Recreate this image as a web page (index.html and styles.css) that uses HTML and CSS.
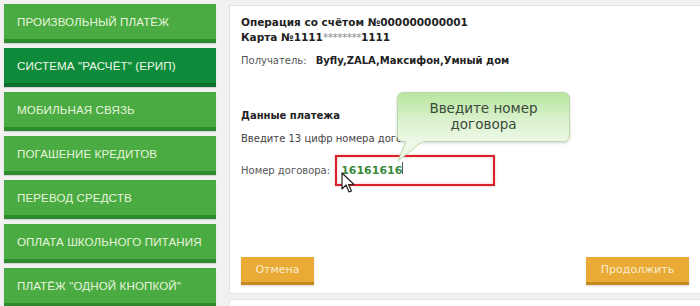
FILE: index.html
```html
<!DOCTYPE html>
<html lang="ru">
<head>
<meta charset="utf-8">
<title>ЕРИП</title>
<link rel="stylesheet" href="styles.css">
</head>
<body>
<div class="page">
  <nav class="menu">
    <div class="item">ПРОИЗВОЛЬНЫЙ ПЛАТЁЖ</div>
    <div class="item active">СИСТЕМА "РАСЧЁТ" (ЕРИП)</div>
    <div class="item">МОБИЛЬНАЯ СВЯЗЬ</div>
    <div class="item">ПОГАШЕНИЕ КРЕДИТОВ</div>
    <div class="item">ПЕРЕВОД СРЕДСТВ</div>
    <div class="item">ОПЛАТА ШКОЛЬНОГО ПИТАНИЯ</div>
    <div class="item">ПЛАТЁЖ "ОДНОЙ КНОПКОЙ"</div>
  </nav>
  <main class="main">
    <section class="card">
      <div class="head">
        <div>Операция со счётом №000000000001</div>
        <div>Карта №1111<span class="stars">********</span>1111</div>
      </div>
      <div class="recipient"><span class="label">Получатель:</span><b>Byfly,ZALA,Максифон,Умный дом</b></div>
      <div class="section-title">Данные платежа</div>
      <div class="hint">Введите 13 цифр номера договора</div>
      <div class="field">
        <span class="label">Номер договора:</span>
        <div class="input">16161616<span class="caret"></span></div>
      </div>
      <div class="actions">
        <button class="btn">Отмена</button>
        <button class="btn">Продолжить</button>
      </div>
      <div class="tooltip">Введите номер<br>договора</div>
      <svg class="tail" width="34" height="22" viewBox="0 0 34 22">
        <path d="M9 0 L1 20 L26 0 Z" fill="#eef8e6" stroke="#b9d8ab" stroke-width="1"/>
        <path d="M8 -1 L27 -1 L26 1 L9 1 Z" fill="#eef8e6"/>
      </svg>
      <svg class="pointer" width="14" height="22" viewBox="0 0 14 22">
        <path d="M1 1 L1 17 L5 13 L8 20 L10.5 19 L7.5 12.5 L13 12.5 Z" fill="#fff" stroke="#222" stroke-width="1.2" stroke-linejoin="round"/>
      </svg>
    </section>
    <section class="card2"></section>
  </main>
</div>
</body>
</html>
```

FILE: styles.css
```css
* { box-sizing: border-box; }
html, body { margin: 0; padding: 0; }
body {
  width: 700px;
  height: 306px;
  overflow: hidden;
  background: #f1f1f1;
  font-family: "DejaVu Sans", Verdana, sans-serif;
  color: #333;
}
.page {
  display: flex;
  align-items: flex-start;
  height: 306px;
}
.menu {
  display: flex;
  flex-direction: column;
  gap: 5px;
  width: 212px;
  margin: 4px 0 0 4px;
  flex: none;
}
.item {
  height: 39px;
  background: #4aab42;
  border-bottom: 4px solid #2e8c2f;
  color: #e8f5dd;
  font-family: "Liberation Sans", Arial, sans-serif;
  font-size: 11.6px;
  letter-spacing: 0.1px;
  display: flex;
  align-items: center;
  padding: 0 0 0 13px;
  box-shadow: 0 1px 1px rgba(0,0,0,0.12);
}
.item.active {
  background: #0d8a3a;
  border-bottom-color: #0a6f2d;
  color: #eef8e8;
}
.main {
  margin-left: 13px;
  flex: 1;
  display: flex;
  flex-direction: column;
  gap: 5px;
  padding-top: 5px;
}
.card {
  position: relative;
  background: #fff;
  height: 289px;
  border: 1px solid #e4e4e4;
  border-right: none;
  padding: 9px 0 0 11px;
}
.card2 {
  background: #fff;
  height: 20px;
  border: 1px solid #e4e4e4;
  border-right: none;
}
.head {
  font-size: 10.5px;
  font-weight: bold;
  line-height: 15px;
  color: #222;
}
.stars { font-weight: normal; color: #888; letter-spacing: -0.5px; }
.recipient {
  margin-top: 9px;
  font-size: 10px;
  line-height: 14px;
  color: #222;
}
.label { color: #555; font-weight: normal; }
.recipient .label { margin-right: 9px; }
.section-title {
  margin-top: 41px;
  font-size: 10px;
  font-weight: bold;
  line-height: 14px;
  color: #222;
}
.hint {
  margin-top: 9px;
  font-size: 10px;
  line-height: 14px;
  color: #444;
}
.field {
  margin-top: 9px;
  display: flex;
  align-items: center;
  gap: 5px;
  font-size: 10px;
}
.input {
  position: relative;
  width: 160px;
  height: 31px;
  border: 2px solid #d8222b;
  box-shadow: inset 0 0 3px rgba(220,60,60,0.35), 0 0 2px rgba(220,60,60,0.4);
  font-weight: bold;
  color: #3b8a3b;
  font-size: 11px;
  display: flex;
  align-items: center;
  padding-left: 4px;
}
.caret {
  display: inline-block;
  width: 1px;
  height: 12px;
  background: #555;
  position: relative;
  top: -3px;
}
.actions {
  margin-top: 71px;
  display: flex;
  justify-content: space-between;
  padding-right: 11px;
}
.btn {
  height: 28px;
  border: none;
  border-bottom: 3px solid #c48a1f;
  background: #e9aa36;
  color: #fbeccd;
  font-family: "DejaVu Sans", Verdana, sans-serif;
  font-size: 11px;
  padding: 0;
  box-shadow: 0 1px 2px rgba(0,0,0,0.15);
}
.btn:first-child { width: 73px; }
.btn:last-child { width: 103px; }
.tooltip {
  position: absolute;
  left: 167px;
  top: 86px;
  width: 173px;
  height: 50px;
  border: 1px solid #b9d8ab;
  border-radius: 6px;
  background: linear-gradient(to bottom, #b8e6a0 0%, #d9f1cc 55%, #eef8e6 100%);
  box-shadow: 0 1px 3px rgba(0,0,0,0.18);
  color: #3a4a3a;
  font-family: "DejaVu Sans", Verdana, sans-serif;
  font-size: 13.5px;
  line-height: 16px;
  text-align: center;
  padding-top: 7px;
}
.tail {
  position: absolute;
  left: 167px;
  top: 135px;
}
.pointer {
  position: absolute;
  left: 111px;
  top: 166px;
}
```
